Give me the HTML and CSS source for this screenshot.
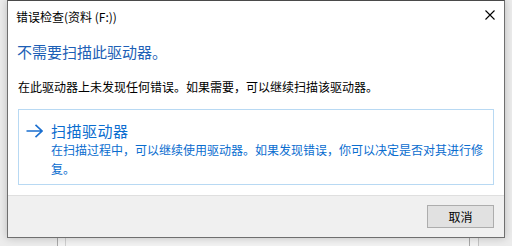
FILE: index.html
```html
<!DOCTYPE html>
<html lang="zh-CN">
<head>
    <meta charset="UTF-8">
    <title>错误检查(资料 (F:))</title>
    <link rel="stylesheet" href="styles.css">
</head>
<body>
    <!-- window behind the dialog -->
    <div class="behind">
        <div class="behind-inner"></div>
    </div>

    <div class="dialog">
        <div class="titlebar">
            <span class="title">错误检查(资料 (F:))</span>
            <svg class="close" width="10" height="10" viewBox="0 0 10 10">
                <path d="M0.5 0.5 L9.5 9.5 M9.5 0.5 L0.5 9.5" stroke="#000" stroke-width="1.1" fill="none"/>
            </svg>
        </div>

        <div class="content">
            <h1 class="heading">不需要扫描此驱动器。</h1>
            <p class="message">在此驱动器上未发现任何错误。如果需要，可以继续扫描该驱动器。</p>

            <div class="command">
                <svg class="arrow" width="17" height="14" viewBox="0 0 17 14">
                    <path d="M0.5 7 H16 M9.5 0.8 L16 7 L9.5 13.2" stroke="#1a6fd0" stroke-width="1.6" fill="none"/>
                </svg>
                <div class="command-text">
                    <div class="command-title">扫描驱动器</div>
                    <div class="command-desc">在扫描过程中，可以继续使用驱动器。如果发现错误，你可以决定是否对其进行修复。</div>
                </div>
            </div>
        </div>

        <div class="footer">
            <button class="btn">取消</button>
        </div>
    </div>
</body>
</html>
```

FILE: styles.css
```css
html, body {
    margin: 0;
    padding: 0;
}
body {
    width: 512px;
    height: 246px;
    overflow: hidden;
    background: #ececec;
    font-family: "Noto Sans CJK SC", "Liberation Sans", sans-serif;
    position: relative;
}
.behind {
    position: absolute;
    left: 57px;
    top: 200px;
    width: 420px;
    height: 46px;
    border-left: 1px solid #a8a8a8;
    border-right: 1px solid #c4c4c4;
    background: #f2f2f2;
}
.behind-inner {
    margin-left: 7px;
    margin-right: 8px;
    height: 100%;
    border-left: 1px solid #cfcfcf;
    border-right: 1px solid #a8a8a8;
}
.dialog {
    position: relative;
    margin-left: 7px;
    width: 498px;
    height: 238px;
    box-sizing: border-box;
    border: 1px solid #6f6f6f;
    border-top-color: #4a4a4a;
    background: #fff;
    display: flex;
    flex-direction: column;
    box-shadow: 0 0 8px rgba(0, 0, 0, 0.22);
}
.titlebar {
    height: 30px;
    display: flex;
    align-items: center;
    justify-content: space-between;
    padding: 0 9px 0 8px;
}
.title {
    font-size: 12px;
    color: #000;
}
.close {
    margin-top: -2px;
}
.content {
    flex: 1;
    display: flex;
    flex-direction: column;
}
.heading {
    margin: 11px 0 0 9px;
    font-size: 15px;
    font-weight: normal;
    line-height: 20px;
    color: #1d5fb6;
}
.message {
    margin: 17px 0 0 10px;
    font-size: 12px;
    line-height: 16px;
    color: #000;
}
.command {
    margin: 14px 10px 0 10px;
    height: 76px;
    box-sizing: border-box;
    border: 1px solid #b8d9f3;
    display: flex;
    padding: 11px 0 0 7px;
}
.arrow {
    margin-top: 3px;
    margin-right: 8px;
    flex: none;
}
.command-text {
    flex: 1;
    color: #0a6dcf;
}
.command-title {
    font-size: 15px;
    line-height: 19px;
    letter-spacing: 0.5px;
}
.command-desc {
    font-size: 12px;
    line-height: 19px;
}
.footer {
    height: 41px;
    border-top: 1px solid #dfdfdf;
    background: #f0f0f0;
    display: flex;
    justify-content: flex-end;
    align-items: flex-start;
    padding-right: 10px;
}
.btn {
    margin-top: 9px;
    width: 67px;
    height: 23px;
    border: 1px solid #adadad;
    background: #e1e1e1;
    font-family: "Noto Sans CJK SC", sans-serif;
    font-size: 12px;
    color: #000;
    padding: 0;
}
```
